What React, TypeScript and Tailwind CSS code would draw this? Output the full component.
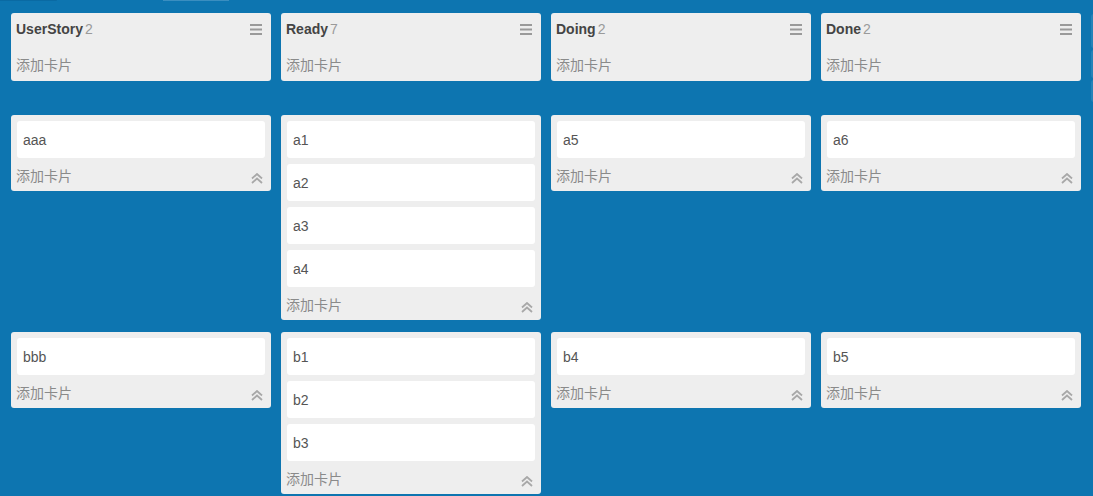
import React from 'react';

type Lane = { id: string; cells: string[][] };

const columns = [
  { id: 'userstory', title: 'UserStory', count: 2 },
  { id: 'ready', title: 'Ready', count: 7 },
  { id: 'doing', title: 'Doing', count: 2 },
  { id: 'done', title: 'Done', count: 2 },
];

const lanes: Lane[] = [
  { id: 'a', cells: [['aaa'], ['a1', 'a2', 'a3', 'a4'], ['a5'], ['a6']] },
  { id: 'b', cells: [['bbb'], ['b1', 'b2', 'b3'], ['b4'], ['b5']] },
];

const MenuIcon = () => (
  <svg width="12" height="11" viewBox="0 0 12 11" className="text-[#9a9a9a]">
    <rect x="0" y="0" width="12" height="2" fill="currentColor" />
    <rect x="0" y="4.5" width="12" height="2" fill="currentColor" />
    <rect x="0" y="9" width="12" height="2" fill="currentColor" />
  </svg>
);

const CollapseIcon = () => (
  <svg width="12" height="11" viewBox="0 0 12 11" fill="none" stroke="#a8a8a8" strokeWidth="1.8">
    <path d="M1 5.5 L6 1 L11 5.5" />
    <path d="M1 10 L6 5.5 L11 10" />
  </svg>
);

const AddCard = ({ collapse }: { collapse?: boolean }) => (
  <div className="flex h-[27px] items-center justify-between px-[5px] pb-[2px]">
    <span className="text-[14px] text-[#8a8a8a]">添加卡片</span>
    {collapse && (
      <span className="mr-[3px] mt-[3px]">
        <CollapseIcon />
      </span>
    )}
  </div>
);

const App = () => {
  return (
    <div
      className="relative h-[496px] w-[1093px] overflow-hidden bg-[#0d75b0]"
      style={{ fontFamily: '"Liberation Sans", Arial, "Noto Sans CJK SC", sans-serif' }}
    >
      {/* leftover edges of the bar above */}
      <div className="flex h-[1px] items-start">
        <div className="h-[1px] w-[57px] rounded-br-[3px] bg-[#0a6aa3]" />
        <div className="ml-[106px] h-[1px] w-[66px] bg-[#3a8ec0]" />
      </div>

      <div className="flex w-max gap-[10px] pl-[11px] pt-[12px]">
        {columns.map((col, ci) => (
          <div key={col.id} className="flex w-[260px] flex-col">
            {/* column header */}
            <div className="flex h-[68px] flex-col rounded-[3px] bg-[#eeeeee]">
              <div className="flex h-[32px] items-center justify-between px-[5px]">
                <div className="flex items-baseline gap-[2px]">
                  <span className="text-[14px] font-bold text-[#444444]">{col.title}</span>
                  <span className="text-[14px] text-[#9a9a9a]">{col.count}</span>
                </div>
                <span className="mr-[4px]">
                  <MenuIcon />
                </span>
              </div>
              <div className="mt-[8px]">
                <AddCard />
              </div>
            </div>

            {/* swimlane cells */}
            <div className="mt-[34px] flex flex-col gap-[12px]">
              {lanes.map((lane, li) => (
                <div key={lane.id} className={li === 0 ? 'h-[205px]' : ''}>
                  <div className="rounded-[3px] bg-[#eeeeee] pt-[6px]">
                    <div className="flex flex-col gap-[6px] px-[6px]">
                      {lane.cells[ci].map((c) => (
                        <div
                          key={c}
                          className="flex h-[37px] items-center rounded-[3px] bg-white px-[6px] pt-[2px] text-[14px] text-[#555555]"
                        >
                          {c}
                        </div>
                      ))}
                    </div>
                    <div className="mt-[6px]">
                      <AddCard collapse />
                    </div>
                  </div>
                </div>
              ))}
            </div>
          </div>
        ))}

        {/* next column, mostly off screen */}
        <div className="flex w-[260px] flex-col gap-[2px] pt-[1px]">
          <div className="h-[34px] rounded-[3px] bg-white/10" />
          <div className="h-[28px] rounded-[3px] bg-white/10" />
          <div className="h-[22px] rounded-[3px] bg-white/10" />
        </div>
      </div>
    </div>
  );
};

export default App;
